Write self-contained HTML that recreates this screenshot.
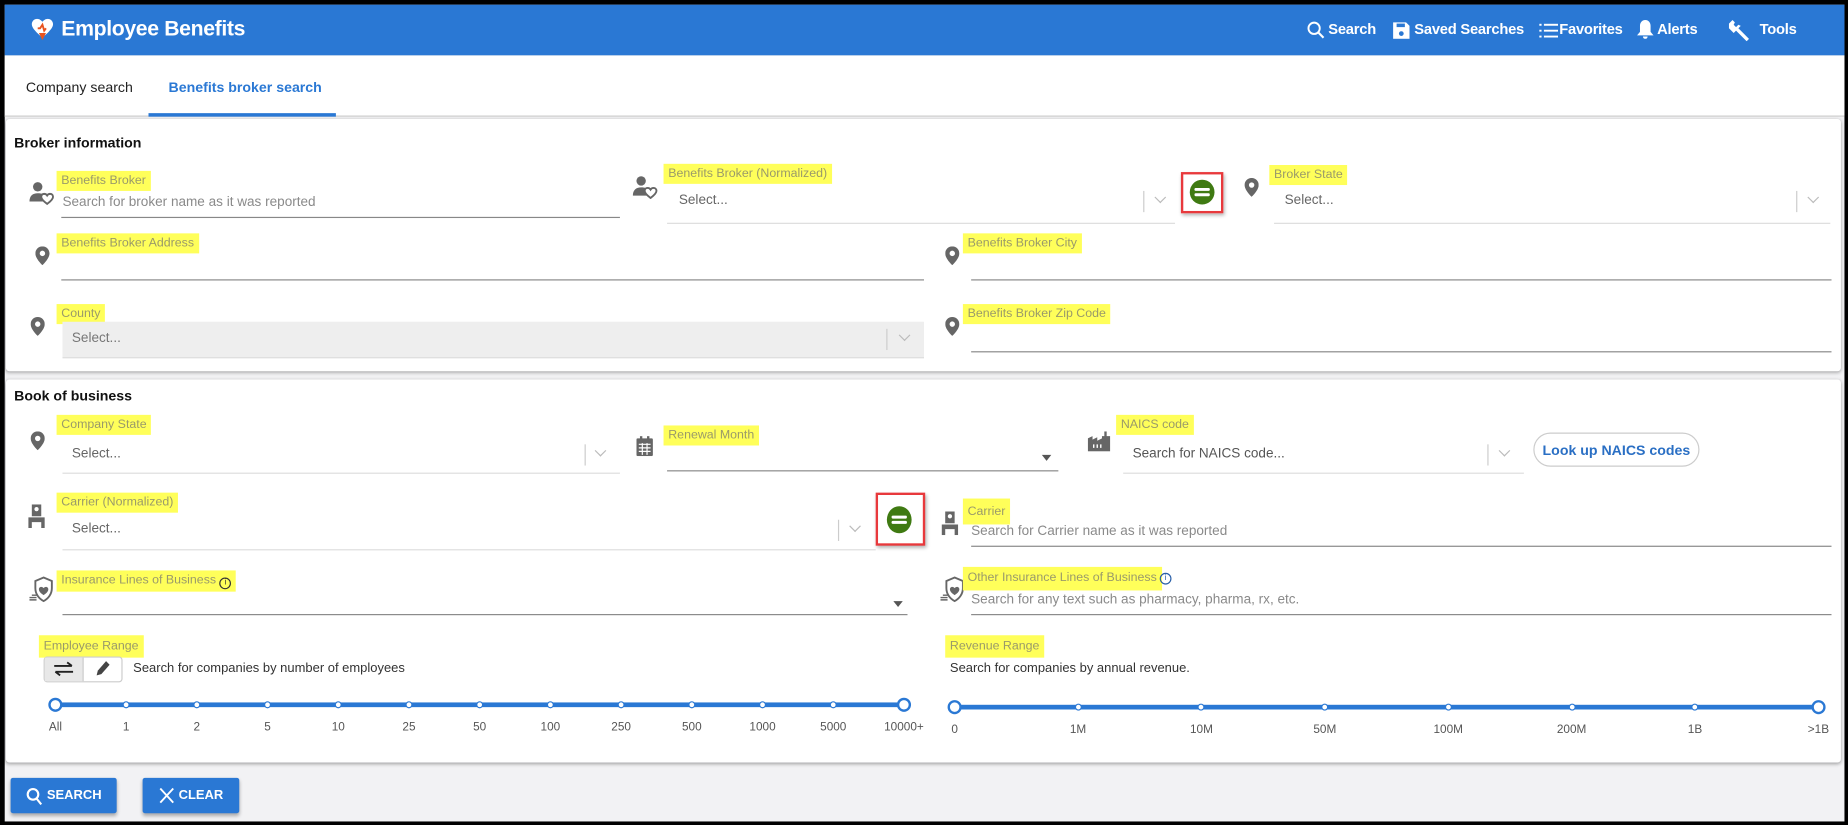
<!DOCTYPE html>
<html><head><meta charset="utf-8">
<style>
*{box-sizing:border-box;margin:0;padding:0}
html,body{width:1848px;height:825px;overflow:hidden;background:#000}
#s{position:absolute;left:0;top:0;width:1568px;height:700px;transform:scale(1.17857);transform-origin:0 0;font-family:"Liberation Sans",Arial,sans-serif;background:#000}
.a{position:absolute}
#page{position:absolute;left:4px;top:4px;width:1561px;height:693px;background:#f2f2f4}
.hdr{left:4px;top:4px;width:1561px;height:43px;background:#2a78d4;box-shadow:0 2px 3px rgba(0,0,0,.3)}
.card{background:#fff;border-radius:3px;box-shadow:0 1px 3px rgba(0,0,0,.35)}
.lbl{background:#ffff5a;color:#9a9a6a;font-size:10.5px;padding:2px 4px 2px 4px;line-height:13px;white-space:nowrap}
.ph{color:#8a8a8a;font-size:11.5px;white-space:nowrap}
.sel{color:#666;font-size:11.5px;white-space:nowrap}
.ul{height:1px;background:#888}
.ull{height:1px;background:#ddd}
.sep{width:1px;height:18px;background:#ccc}
.chev{width:7px;height:7px;border-right:1.3px solid #bbb;border-bottom:1.3px solid #bbb;transform:rotate(45deg)}
.caret{width:0;height:0;border-left:4px solid transparent;border-right:4px solid transparent;border-top:5px solid #555}
.ttl{font-size:12px;font-weight:bold;color:#111}
.nav{color:#fff;font-size:12.5px;font-weight:bold;white-space:nowrap;letter-spacing:-.2px}
.tick{font-size:10px;color:#555;white-space:nowrap;transform:translateX(-50%)}
.btn{background:#2a78d4;color:#fff;font-size:11px;font-weight:bold;border-radius:2px;box-shadow:0 2px 3px rgba(0,0,0,.3);display:flex;align-items:center;justify-content:center;gap:4px}
</style></head><body><div id="s">
<div id="page"></div>
<div class="a hdr"></div>
<svg class="a" style="left:26px;top:15px" width="20" height="20" viewBox="0 0 20 20"><path d="M10 17C3 11 1 8 1 5.5 1 3 3 1 5.5 1 7.5 1 9 2.3 10 3.5 11 2.3 12.5 1 14.5 1 17 1 19 3 19 5.5 19 8 17 11 10 17z" fill="#fff"/><path d="M6 9h2l2-3 1.5 5L13 9" stroke="#e8531f" stroke-width="1.6" fill="none"/><path d="M7 13l3 6 3-6z" fill="#e8531f"/></svg>
<div class="a" style="left:52px;top:14px;color:#fff;font-size:18px;font-weight:bold;letter-spacing:-.3px">Employee Benefits</div>
<svg class="a" style="left:1109px;top:18px" width="15" height="15" viewBox="0 0 15 15"><circle cx="6" cy="6" r="4.8" stroke="#fff" stroke-width="1.6" fill="none"/><path d="M9.5 9.5l4.5 4.5" stroke="#fff" stroke-width="1.8"/></svg>
<div class="a nav" style="left:1127px;top:18px">Search</div>
<svg class="a" style="left:1182px;top:18px" width="14" height="15" viewBox="0 0 14 15"><path d="M0 1h11l3 3v11H0z" fill="#fff"/><rect x="3" y="2" width="7" height="3" fill="#2a78d4"/><circle cx="7" cy="10.5" r="2" fill="#2a78d4"/></svg>
<div class="a nav" style="left:1200px;top:18px">Saved Searches</div>
<svg class="a" style="left:1306px;top:20px" width="16" height="12" viewBox="0 0 16 12"><path d="M0 1h2M4 1h12M0 6h2M4 6h12M0 11h2M4 11h12" stroke="#fff" stroke-width="1.6"/></svg>
<div class="a nav" style="left:1323px;top:18px">Favorites</div>
<svg class="a" style="left:1389px;top:17px" width="14" height="16" viewBox="0 0 14 16"><path d="M7 0C4 0 2.5 2.5 2.5 5v5L0 13h14l-2.5-3V5C11.5 2.5 10 0 7 0zM5 14h4a2 2 0 0 1-4 0z" fill="#fff"/></svg>
<div class="a nav" style="left:1406px;top:18px">Alerts</div>
<svg class="a" style="left:1465px;top:16px" width="20" height="19" viewBox="0 0 20 19"><path d="M2 4l3-3 2 2-1 2 2 2 2-2 2 1-2 2 9 9-2 2-9-9-2 2-4-4z" fill="#fff"/></svg>
<div class="a nav" style="left:1493px;top:18px">Tools</div>
<div class="a" style="left:4px;top:47px;width:1561px;height:52px;background:#fff;border-bottom:1px solid #ccc"></div>
<div class="a" style="left:22px;top:67px;font-size:12px;color:#222">Company search</div>
<div class="a" style="left:143px;top:67px;font-size:12px;color:#2a78d4;font-weight:bold">Benefits broker search</div>
<div class="a" style="left:126px;top:96px;width:159px;height:3px;background:#2a78d4"></div>
<div class="a card" style="left:5px;top:101px;width:1557px;height:214px"></div>
<div class="a ttl" style="left:12px;top:114px">Broker information</div>
<svg class="a" style="left:24px;top:154px" width="22" height="20" viewBox="0 0 22 20"><circle cx="8" cy="4.5" r="4" fill="#666"/><path d="M1 17c0-5 3-7 7-7s5 1 6 2v5z" fill="#666"/><path d="M16 19c-4-3-5-4.5-5-6 0-1.5 1-2.5 2.5-2.5 1 0 2 .6 2.5 1.4.5-.8 1.5-1.4 2.5-1.4 1.5 0 2.5 1 2.5 2.5 0 1.5-1 3-5 6z" fill="#fff" stroke="#666" stroke-width="1.6"/></svg>
<div class="a lbl" style="left:48px;top:145px">Benefits Broker</div>
<div class="a ph" style="left:53px;top:166px">Search for broker name as it was reported</div>
<div class="a ul" style="left:52px;top:184px;width:474px"></div>
<svg class="a" style="left:536px;top:149px" width="22" height="20" viewBox="0 0 22 20"><circle cx="8" cy="4.5" r="4" fill="#666"/><path d="M1 17c0-5 3-7 7-7s5 1 6 2v5z" fill="#666"/><path d="M16 19c-4-3-5-4.5-5-6 0-1.5 1-2.5 2.5-2.5 1 0 2 .6 2.5 1.4.5-.8 1.5-1.4 2.5-1.4 1.5 0 2.5 1 2.5 2.5 0 1.5-1 3-5 6z" fill="#fff" stroke="#666" stroke-width="1.6"/></svg>
<div class="a lbl" style="left:563px;top:139px">Benefits Broker (Normalized)</div>
<div class="a sel" style="left:576px;top:164px">Select...</div>
<div class="a sep" style="left:970px;top:162px"></div>
<div class="a chev" style="left:981px;top:164px"></div>
<div class="a ull" style="left:566px;top:189px;width:431px"></div>
<div class="a" style="left:1002px;top:146px;width:36px;height:35px;border:2px solid #e8393c;box-shadow:1px 2px 3px rgba(0,0,0,.3)"></div>
<svg class="a" style="left:1009px;top:152px" width="22" height="22" viewBox="0 0 22 22"><circle cx="11" cy="11" r="10.5" fill="#3f7a12"/><rect x="4.5" y="7.5" width="13" height="2.5" rx="1" fill="#fff"/><rect x="4.5" y="12" width="13" height="2.5" rx="1" fill="#fff"/></svg>
<svg class="a" style="left:1056px;top:151px" width="12" height="16" viewBox="0 0 12 16"><path d="M6 0C2.7 0 0 2.6 0 6c0 4.5 6 10 6 10s6-5.5 6-10C12 2.6 9.3 0 6 0zm0 8.3A2.3 2.3 0 1 1 6 3.7a2.3 2.3 0 0 1 0 4.6z" fill="#666"/></svg>
<div class="a lbl" style="left:1077px;top:140px">Broker State</div>
<div class="a sel" style="left:1090px;top:164px">Select...</div>
<div class="a sep" style="left:1524px;top:162px"></div>
<div class="a chev" style="left:1535px;top:164px"></div>
<div class="a ull" style="left:1081px;top:189px;width:472px"></div>
<svg class="a" style="left:30px;top:209px" width="12" height="16" viewBox="0 0 12 16"><path d="M6 0C2.7 0 0 2.6 0 6c0 4.5 6 10 6 10s6-5.5 6-10C12 2.6 9.3 0 6 0zm0 8.3A2.3 2.3 0 1 1 6 3.7a2.3 2.3 0 0 1 0 4.6z" fill="#666"/></svg>
<div class="a lbl" style="left:48px;top:198px">Benefits Broker Address</div>
<div class="a ul" style="left:52px;top:237px;width:732px"></div>
<svg class="a" style="left:802px;top:209px" width="12" height="16" viewBox="0 0 12 16"><path d="M6 0C2.7 0 0 2.6 0 6c0 4.5 6 10 6 10s6-5.5 6-10C12 2.6 9.3 0 6 0zm0 8.3A2.3 2.3 0 1 1 6 3.7a2.3 2.3 0 0 1 0 4.6z" fill="#666"/></svg>
<div class="a lbl" style="left:817px;top:198px">Benefits Broker City</div>
<div class="a ul" style="left:824px;top:237px;width:730px"></div>
<svg class="a" style="left:26px;top:269px" width="12" height="16" viewBox="0 0 12 16"><path d="M6 0C2.7 0 0 2.6 0 6c0 4.5 6 10 6 10s6-5.5 6-10C12 2.6 9.3 0 6 0zm0 8.3A2.3 2.3 0 1 1 6 3.7a2.3 2.3 0 0 1 0 4.6z" fill="#666"/></svg>
<div class="a lbl" style="left:48px;top:258px">County</div>
<div class="a" style="left:53px;top:273px;width:731px;height:31px;background:#eee;border-bottom:1px solid #ddd"></div>
<div class="a sel" style="left:61px;top:281px;color:#777">Select...</div>
<div class="a sep" style="left:752px;top:279px"></div>
<div class="a chev" style="left:764px;top:281px"></div>
<svg class="a" style="left:802px;top:269px" width="12" height="16" viewBox="0 0 12 16"><path d="M6 0C2.7 0 0 2.6 0 6c0 4.5 6 10 6 10s6-5.5 6-10C12 2.6 9.3 0 6 0zm0 8.3A2.3 2.3 0 1 1 6 3.7a2.3 2.3 0 0 1 0 4.6z" fill="#666"/></svg>
<div class="a lbl" style="left:817px;top:258px">Benefits Broker Zip Code</div>
<div class="a ul" style="left:824px;top:298px;width:730px"></div>
<div class="a card" style="left:5px;top:322px;width:1557px;height:325px"></div>
<div class="a ttl" style="left:12px;top:329px">Book of business</div>
<svg class="a" style="left:26px;top:366px" width="12" height="16" viewBox="0 0 12 16"><path d="M6 0C2.7 0 0 2.6 0 6c0 4.5 6 10 6 10s6-5.5 6-10C12 2.6 9.3 0 6 0zm0 8.3A2.3 2.3 0 1 1 6 3.7a2.3 2.3 0 0 1 0 4.6z" fill="#666"/></svg>
<div class="a lbl" style="left:48px;top:352px">Company State</div>
<div class="a sel" style="left:61px;top:379px">Select...</div>
<div class="a sep" style="left:496px;top:377px"></div>
<div class="a chev" style="left:506px;top:379px"></div>
<div class="a ull" style="left:53px;top:401px;width:473px"></div>
<svg class="a" style="left:540px;top:370px" width="14" height="17" viewBox="0 0 14 17"><rect x="0" y="2" width="14" height="15" rx="1" fill="#666"/><rect x="3" y="0" width="2" height="4" fill="#666"/><rect x="9" y="0" width="2" height="4" fill="#666"/><path d="M2 7h10M2 10h10M2 13h10M5 6v10M9 6v10" stroke="#fff" stroke-width="1"/></svg>
<div class="a lbl" style="left:563px;top:361px">Renewal Month</div>
<div class="a caret" style="left:884px;top:386px"></div>
<div class="a ul" style="left:566px;top:399px;width:332px"></div>
<svg class="a" style="left:923px;top:366px" width="19" height="17" viewBox="0 0 19 17"><path d="M0 17V6l4-2v3l4-2v3l4-2V4h2V0h2v4h3v13z" fill="#666"/><path d="M5 11v3M8 11v3M11 11v3" stroke="#fff" stroke-width="1.2"/></svg>
<div class="a lbl" style="left:947px;top:352px">NAICS code</div>
<div class="a ph" style="left:961px;top:379px;color:#555">Search for NAICS code...</div>
<div class="a sep" style="left:1262px;top:377px"></div>
<div class="a chev" style="left:1273px;top:379px"></div>
<div class="a ull" style="left:953px;top:401px;width:340px"></div>
<div class="a" style="left:1301px;top:367px;width:141px;height:29px;border:1px solid #ccc;border-radius:15px;color:#2a6fc4;font-size:12px;font-weight:bold;display:flex;align-items:center;justify-content:center">Look up NAICS codes</div>
<svg class="a" style="left:24px;top:428px" width="14" height="20" viewBox="0 0 14 20"><path d="M3 0h8v10H3z" fill="#666"/><circle cx="7" cy="4" r="1.8" fill="#fff"/><path d="M0 11h14v9h-3v-5H3v5H0z" fill="#666"/></svg>
<div class="a lbl" style="left:48px;top:418px">Carrier (Normalized)</div>
<div class="a sel" style="left:61px;top:443px">Select...</div>
<div class="a sep" style="left:711px;top:441px"></div>
<div class="a chev" style="left:722px;top:443px"></div>
<div class="a ull" style="left:53px;top:466px;width:690px"></div>
<div class="a" style="left:743px;top:418px;width:42px;height:45px;border:2px solid #e8393c;box-shadow:1px 2px 3px rgba(0,0,0,.3)"></div>
<svg class="a" style="left:752px;top:429px" width="22" height="24" viewBox="0 0 22 24"><ellipse cx="11" cy="12" rx="10.5" ry="11.5" fill="#3f7a12"/><rect x="4.5" y="8.5" width="13" height="2.5" rx="1" fill="#fff"/><rect x="4.5" y="13" width="13" height="2.5" rx="1" fill="#fff"/></svg>
<svg class="a" style="left:799px;top:434px" width="14" height="20" viewBox="0 0 14 20"><path d="M3 0h8v10H3z" fill="#666"/><circle cx="7" cy="4" r="1.8" fill="#fff"/><path d="M0 11h14v9h-3v-5H3v5H0z" fill="#666"/></svg>
<div class="a lbl" style="left:817px;top:423px;padding-top:5px;padding-bottom:4px">Carrier</div>
<div class="a ph" style="left:824px;top:445px">Search for Carrier name as it was reported</div>
<div class="a ul" style="left:824px;top:463px;width:730px"></div>
<svg class="a" style="left:24px;top:489px" width="22" height="24" viewBox="0 0 22 24"><path d="M13 1l7 3v6c0 5-3 9-7 11-4-2-7-6-7-11V4z" fill="#fff" stroke="#666" stroke-width="1.6"/><path d="M13 16c-3-2-4-3.5-4-5 0-1 .8-2 2-2 .8 0 1.5.5 2 1 .5-.5 1.200-1 2-1 1.2 0 2 1 2 2 0 1.5-1 3-4 5z" fill="#666"/><path d="M1 18h6M1 20h6M3 16h4" stroke="#666" stroke-width="1.2"/></svg>
<div class="a lbl" style="left:48px;top:484px">Insurance Lines of Business <span style="display:inline-block;width:10px;height:10px;border:1px solid #333;border-radius:50%;font-size:7px;line-height:8px;text-align:center;color:#333;vertical-align:-1px">i</span></div>
<div class="a caret" style="left:758px;top:510px"></div>
<div class="a ul" style="left:53px;top:521px;width:717px"></div>
<svg class="a" style="left:797px;top:489px" width="22" height="24" viewBox="0 0 22 24"><path d="M13 1l7 3v6c0 5-3 9-7 11-4-2-7-6-7-11V4z" fill="#fff" stroke="#666" stroke-width="1.6"/><path d="M13 16c-3-2-4-3.5-4-5 0-1 .8-2 2-2 .8 0 1.5.5 2 1 .5-.5 1.2-1 2-1 1.2 0 2 1 2 2 0 1.5-1 3-4 5z" fill="#666"/><path d="M1 18h6M1 20h6M3 16h4" stroke="#666" stroke-width="1.2"/></svg>
<div class="a lbl" style="left:817px;top:481px;padding-top:3px;padding-bottom:4px">Other Insurance Lines of Business</div>
<div class="a" style="left:984px;top:486px;width:10px;height:10px;border:1px solid #2a5fa8;border-radius:50%;font-size:7px;line-height:8px;text-align:center;color:#2a5fa8">i</div>
<div class="a ph" style="left:824px;top:503px">Search for any text such as pharmacy, pharma, rx, etc.</div>
<div class="a ul" style="left:824px;top:521px;width:730px"></div>
<div class="a lbl" style="left:33px;top:539px;padding-top:3px;padding-bottom:3px">Employee Range</div>
<div class="a" style="left:37px;top:557px;width:67px;height:22px;border:1px solid #ccc;border-radius:3px;background:#fff"></div>
<div class="a" style="left:38px;top:558px;width:33px;height:20px;background:#e8e8e8;border-right:1px solid #ccc"></div>
<svg class="a" style="left:45px;top:561px" width="18" height="13" viewBox="0 0 18 13"><path d="M1 4h15M12 1l4 3M17 9H2M6 12l-4-3" stroke="#222" stroke-width="1.6" fill="none"/></svg>
<svg class="a" style="left:81px;top:560px" width="13" height="14" viewBox="0 0 13 14"><path d="M1 13l1-4 7-8 3 3-7 8z" fill="#444"/></svg>
<div class="a" style="left:113px;top:561px;font-size:11px;color:#333">Search for companies by number of employees</div>
<div class="a" style="left:47px;top:596px;width:720px;height:4px;background:#2a78d4"></div>
<div class="a lbl" style="left:802px;top:539px;padding-top:3px;padding-bottom:3px">Revenue Range</div>
<div class="a" style="left:806px;top:561px;font-size:11px;color:#333">Search for companies by annual revenue.</div>
<div class="a" style="left:810px;top:598px;width:733px;height:4px;background:#2a78d4"></div>
<div class="a btn" style="left:9px;top:660px;width:90px;height:30px"><svg width="14" height="15" viewBox="0 0 14 15"><circle cx="6" cy="6" r="4.5" stroke="#fff" stroke-width="1.8" fill="none"/><path d="M9 9.5l4 5" stroke="#fff" stroke-width="1.8"/></svg>SEARCH</div>
<div class="a btn" style="left:121px;top:660px;width:82px;height:30px"><svg width="13" height="14" viewBox="0 0 13 14"><path d="M1 1l11 12M12 1L1 13" stroke="#fff" stroke-width="1.6"/></svg>CLEAR</div>
<script>
var s=document.getElementById('s');
function add(html){s.insertAdjacentHTML('beforeend',html)}
var e=['All','1','2','5','10','25','50','100','250','500','1000','5000','10000+'];
for(var i=0;i<e.length;i++){var x=47+i*60;var end=(i==0||i==e.length-1);
 if(end)add('<div class="a" style="left:'+(x-6)+'px;top:592px;width:12px;height:12px;border:2px solid #2a78d4;border-radius:50%;background:#fff"></div>');
 else add('<div class="a" style="left:'+(x-3)+'px;top:595px;width:6px;height:6px;border:1.3px solid #2a78d4;border-radius:50%;background:#fff"></div>');
 add('<div class="a tick" style="left:'+x+'px;top:612px">'+e[i]+'</div>');}
var r=['0','1M','10M','50M','100M','200M','1B','>1B'];
for(var i=0;i<r.length;i++){var x=810+i*104.7;var end=(i==0||i==r.length-1);
 if(end)add('<div class="a" style="left:'+(x-6)+'px;top:594px;width:12px;height:12px;border:2px solid #2a78d4;border-radius:50%;background:#fff"></div>');
 else add('<div class="a" style="left:'+(x-3)+'px;top:597px;width:6px;height:6px;border:1.3px solid #2a78d4;border-radius:50%;background:#fff"></div>');
 add('<div class="a tick" style="left:'+x+'px;top:614px">'+r[i].replace('>','&gt;')+'</div>');}
</script>
</div></body></html>
